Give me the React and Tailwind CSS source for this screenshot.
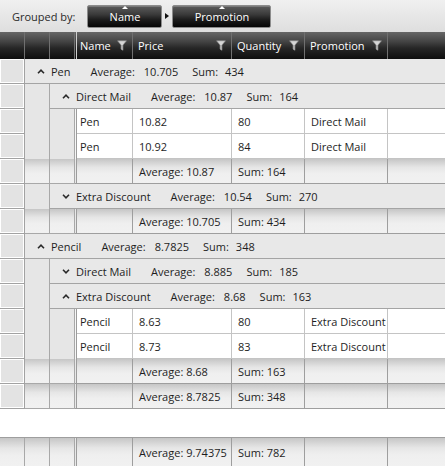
import React from "react";

const FOOT_BG = "bg-[linear-gradient(to_bottom,#c6c6c6_0%,#e6e6e6_35%,#efefef_60%,#f1f1f1_100%)]";
const HEAD_BG = "bg-[linear-gradient(to_bottom,#666666_0%,#444444_35%,#262626_60%,#0e0e0e_100%)]";
const BTN_BG = "bg-[linear-gradient(to_bottom,#5c5c5c_0%,#3a3a3a_40%,#1c1c1c_65%,#050505_100%)]";

function Funnel() {
  return (
    <svg width="10" height="11" viewBox="0 0 10 11" className="shrink-0">
      <path d="M0.5 0.8 H9.5 L6 5 V10.3 L4 9 V5 Z" fill="#d6d6d6" stroke="#8a8a8a" strokeWidth="0.6" />
      <path d="M4 5 V9 L6 10.3 V5 Z" fill="#a8a8a8" />
    </svg>
  );
}

function Caret({ up }) {
  return (
    <svg width="8" height="5" viewBox="0 0 8 5" className="shrink-0">
      <path
        d={up ? "M1 4.2 L4 1.2 L7 4.2" : "M1 0.8 L4 3.8 L7 0.8"}
        fill="none"
        stroke="#2a2a2a"
        strokeWidth="1.6"
      />
    </svg>
  );
}

function Indicator() {
  return (
    <div className="w-[25px] h-full shrink-0 bg-[#e3e3e3] border-r border-b border-[#a2a2a2] shadow-[inset_1px_1px_0_#ffffff,inset_-1px_-1px_0_#ffffff]" />
  );
}

function Indent({ footer }) {
  return (
    <div
      className={
        "w-[25px] h-full shrink-0 border-r border-[#a8a8a8] " +
        (footer ? FOOT_BG + " border-b" : "bg-[#e6e6e6]")
      }
    />
  );
}

function Divider({ footer }) {
  return (
    <div
      className={
        "w-[2px] h-full shrink-0 border-r border-[#9c9c9c] " +
        (footer ? "bg-[#e8e8e8] border-b" : "bg-[#f6f6f6]")
      }
    />
  );
}

const WIDTHS = ["w-[56px]", "w-[99px]", "w-[73px]", "w-[83px]"];

function DataRow({ name, price, qty, promo }) {
  const vals = [name, price, qty, promo];
  return (
    <div className="flex h-[25px]">
      <Indicator />
      <Indent />
      <Indent />
      <Divider />
      {vals.map((v, i) => (
        <div
          key={i}
          className={
            WIDTHS[i] +
            " shrink-0 h-full flex items-center bg-white border-r border-b border-[#c4c4c4] text-[#1e1e1e] " +
            (i === 0 ? "pl-[3px]" : "pl-[6px]")
          }
        >
          {v}
        </div>
      ))}
      <div className="flex-1 h-full bg-white border-b border-[#c4c4c4]" />
    </div>
  );
}

function FooterCells({ avg, sum }) {
  const vals = ["", avg ? "Average: " + avg : "", sum ? "Sum: " + sum : "", ""];
  return (
    <>
      {vals.map((v, i) => (
        <div
          key={i}
          className={
            WIDTHS[i] +
            " shrink-0 h-full flex items-center border-r border-b border-[#9e9e9e] text-[#1e1e1e] pl-[6px] " +
            FOOT_BG
          }
        >
          {v}
        </div>
      ))}
      <div className={"flex-1 h-full border-b border-[#9e9e9e] " + FOOT_BG} />
    </>
  );
}

function FooterRow({ avg, sum }) {
  return (
    <div className="flex h-[25px]">
      <Indicator />
      <Indent footer />
      <Indent footer />
      <Divider footer />
      <FooterCells avg={avg} sum={sum} />
    </div>
  );
}

function GroupHeader({ up, label, avg, sum }) {
  return (
    <div className="flex-1 h-full flex items-center bg-[#e8e8e8] border-b border-[#a4a4a4] text-[#1e1e1e]">
      <div className="w-[26px] shrink-0 flex pl-[12px] pt-[1px]">
        <Caret up={up} />
      </div>
      <span>{label}</span>
      <span className="ml-[20px]">Average:</span>
      <span className="ml-[9px]">{avg}</span>
      <span className="ml-[14px]">Sum:</span>
      <span className="ml-[7px]">{sum}</span>
    </div>
  );
}

function GroupRow({ level, ...rest }) {
  return (
    <div className="flex h-[25px]">
      <Indicator />
      {level >= 1 && <Indent />}
      <GroupHeader {...rest} />
    </div>
  );
}

function HeaderCell({ label, w }) {
  return (
    <div
      className={
        w +
        " shrink-0 h-full flex items-center justify-between border-r border-[#707070] pr-[5px] " +
        (label === "Name" ? "pl-[3px]" : "pl-[5px]")
      }
    >
      <span className="text-white">{label}</span>
      <Funnel />
    </div>
  );
}

function GroupButton({ label, w }) {
  return (
    <div
      className={
        w +
        " h-[23px] relative flex items-center justify-center rounded-[2px] border border-[#8c8c8c] text-white shadow-[inset_0_1px_0_#7a7a7a] " +
        BTN_BG
      }
    >
      <span className="relative pt-[1px]">
        {label}
        <span className="absolute left-1/2 -translate-x-1/2 top-[-4px] w-0 h-0 border-l-[3px] border-r-[3px] border-b-[3px] border-l-transparent border-r-transparent border-b-white" />
      </span>
    </div>
  );
}

export default function App() {
  return (
    <div className="w-[445px] h-[466px] overflow-hidden bg-white font-['Open_Sans',sans-serif] text-[11px] leading-none">
      {/* Group panel */}
      <div className="h-[32px] flex items-center bg-[linear-gradient(to_bottom,#f0f0f0,#dedede)]">
        <span className="ml-[12px] text-[#2a2a2a]">Grouped by:</span>
        <div className="ml-[12px]">
          <GroupButton label="Name" w="w-[75px]" />
        </div>
        <div className="ml-[3px] mr-[3px] w-0 h-0 border-t-[3.5px] border-b-[3.5px] border-l-[4px] border-t-transparent border-b-transparent border-l-[#111]" />
        <GroupButton label="Promotion" w="w-[99px]" />
      </div>

      {/* Column header */}
      <div className={"h-[27px] flex " + HEAD_BG}>
        <div className="w-[25px] h-full shrink-0 border-r border-[#707070]" />
        <div className="w-[25px] h-full shrink-0 border-r border-[#707070]" />
        <div className="w-[25px] h-full shrink-0 border-r border-[#707070]" />
        <div className="w-[2px] h-full shrink-0 border-r border-[#cfcfcf]" />
        <HeaderCell label="Name" w="w-[56px]" />
        <HeaderCell label="Price" w="w-[99px]" />
        <HeaderCell label="Quantity" w="w-[73px]" />
        <HeaderCell label="Promotion" w="w-[83px]" />
        <div className="flex-1 h-full" />
      </div>

      {/* Body */}
      <GroupRow level={0} up label="Pen" avg="10.705" sum="434" />
      <GroupRow level={1} up label="Direct Mail" avg="10.87" sum="164" />
      <DataRow name="Pen" price="10.82" qty="80" promo="Direct Mail" />
      <DataRow name="Pen" price="10.92" qty="84" promo="Direct Mail" />
      <FooterRow avg="10.87" sum="164" />
      <GroupRow level={1} up={false} label="Extra Discount" avg="10.54" sum="270" />
      <FooterRow avg="10.705" sum="434" />
      <GroupRow level={0} up label="Pencil" avg="8.7825" sum="348" />
      <GroupRow level={1} up={false} label="Direct Mail" avg="8.885" sum="185" />
      <GroupRow level={1} up label="Extra Discount" avg="8.68" sum="163" />
      <DataRow name="Pencil" price="8.63" qty="80" promo="Extra Discount" />
      <DataRow name="Pencil" price="8.73" qty="83" promo="Extra Discount" />
      <FooterRow avg="8.68" sum="163" />
      <FooterRow avg="8.7825" sum="348" />

      <div className="h-[28px] bg-white" />

      {/* Grand total footer */}
      <div className="flex h-[30px] border-t border-[#9e9e9e]">
        <div className={"w-[25px] h-full shrink-0 border-r border-[#a8a8a8] " + FOOT_BG} />
        <div className={"w-[25px] h-full shrink-0 border-r border-[#a8a8a8] " + FOOT_BG} />
        <div className={"w-[25px] h-full shrink-0 border-r border-[#a8a8a8] " + FOOT_BG} />
        <Divider footer />
        <FooterCells avg="9.74375" sum="782" />
      </div>
    </div>
  );
}
